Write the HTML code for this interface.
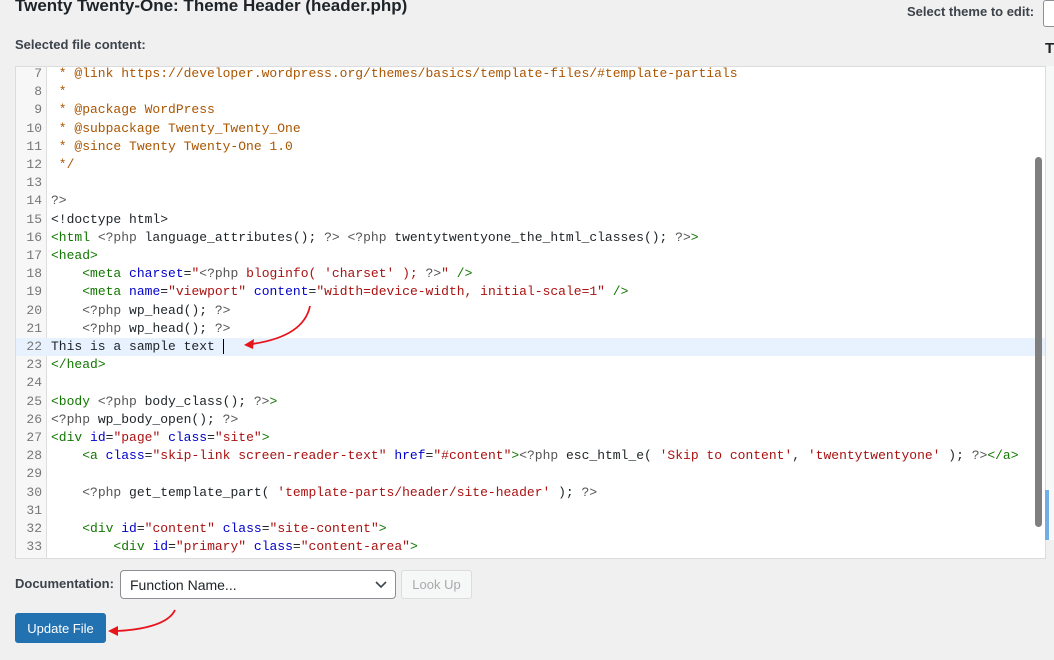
<!DOCTYPE html>
<html><head><meta charset="utf-8"><style>
body{margin:0;width:1054px;height:660px;background:#f0f0f1;font-family:"Liberation Sans",sans-serif;color:#1d2327;position:relative;overflow:hidden}
.a{position:absolute}
h1{position:absolute;left:15px;top:-6px;margin:0;font-size:17px;font-weight:600;line-height:24px}
.ed{left:15px;top:66px;width:1029px;height:491px;background:#fff;border:1px solid #dcdcde;overflow:hidden}
.gut{position:absolute;left:0;top:0;width:30px;height:100%;background:#f7f7f7;border-right:1px solid #ddd}
.ln{position:absolute;left:0;width:1029px;height:18.2px;font:13px/18.2px "Liberation Mono",monospace;white-space:pre}
.ln .n{display:inline-block;width:26px;text-align:right;color:#777;margin-right:9px}
.c{color:#aa5500}.t{color:#117700}.at{color:#0000cc}.s{color:#aa1111}.p{color:#555}
.hl{background:#e8f2ff}
.btn{border-radius:3px;font-size:13px;display:flex;align-items:center;justify-content:center}
</style></head><body>
<h1>Twenty Twenty-One: Theme Header (header.php)</h1>
<div class="a" style="left:907px;top:4px;font-size:13px;font-weight:600;color:#3c434a">Select theme to edit:</div>
<div class="a" style="left:1043px;top:0;width:20px;height:25px;background:#fff;border:1px solid #8c8f94;border-radius:3px"></div>
<div class="a" style="left:1045px;top:40px;font-size:15px;font-weight:600">T</div>
<div class="a" style="left:15px;top:37px;font-size:13px;font-weight:600;color:#3c434a">Selected file content:</div>
<div class="a ed">
<div class="gut"></div>
<div id="code"></div>
<div class="a" style="left:1019px;top:90px;width:7px;height:370px;background:#7f7f7f;border-radius:4px"></div>
</div>
<div class="a" style="left:1045px;top:66px;width:9px;height:474px;background:#f6f7f7;border-left:1px solid #dcdcde"></div>
<div class="a" style="left:1045px;top:490px;width:4px;height:50px;background:#72aee6"></div>
<div class="a" style="left:15px;top:576px;font-size:13px;font-weight:600;color:#3c434a">Documentation:</div>
<div class="a" style="left:120px;top:570px;width:274px;height:29px;background:#fff;border:1px solid #8c8f94;border-radius:4px;font-size:14px;line-height:29px;padding-left:9px;box-sizing:border-box;width:276px">Function Name...
<svg class="a" style="right:8px;top:9px" width="12" height="10"><path d="M1 2l5 5 5-5" fill="none" stroke="#3c434a" stroke-width="1.6"/></svg></div>
<div class="a btn" style="left:401px;top:570px;width:71px;height:29px;border:1px solid #dcdcde;background:#f6f7f7;color:#a7aaad;box-sizing:border-box;font-size:13px">Look Up</div>
<div class="a btn" style="left:15px;top:613px;width:91px;height:30px;background:#2271b1;color:#fff;border:1px solid #2271b1;box-sizing:border-box">Update File</div>
<svg class="a" style="left:0;top:0" width="1054" height="660">
<path d="M310 306 C305 330 280 340 252 344" fill="none" stroke="#e8141b" stroke-width="1.8"/>
<path d="M244 345 l10 -6 l-1 10z" fill="#e8141b"/>
<path d="M175 610 C168 625 140 630 116 631" fill="none" stroke="#e8141b" stroke-width="1.8"/>
<path d="M108 631 l10 -5 l0 10z" fill="#e8141b"/>
</svg>
<script>
var L=[
['7','<span class="c"> * @link https://developer.wordpress.org/themes/basics/template-files/#template-partials</span>'],
['8','<span class="c"> *</span>'],
['9','<span class="c"> * @package WordPress</span>'],
['10','<span class="c"> * @subpackage Twenty_Twenty_One</span>'],
['11','<span class="c"> * @since Twenty Twenty-One 1.0</span>'],
['12','<span class="c"> */</span>'],
['13',''],
['14','<span class="p">?&gt;</span>'],
['15','&lt;!doctype html&gt;'],
['16','<span class="t">&lt;html </span><span class="p">&lt;?php</span> language_attributes(); <span class="p">?&gt;</span> <span class="p">&lt;?php</span> twentytwentyone_the_html_classes(); <span class="p">?&gt;</span><span class="t">&gt;</span>'],
['17','<span class="t">&lt;head&gt;</span>'],
['18','    <span class="t">&lt;meta</span> <span class="at">charset</span>=<span class="s">"<span class="p">&lt;?php</span> bloginfo( \'charset\' ); <span class="p">?&gt;</span>"</span> <span class="t">/&gt;</span>'],
['19','    <span class="t">&lt;meta</span> <span class="at">name</span>=<span class="s">"viewport"</span> <span class="at">content</span>=<span class="s">"width=device-width, initial-scale=1"</span> <span class="t">/&gt;</span>'],
['20','    <span class="p">&lt;?php</span> wp_head(); <span class="p">?&gt;</span>'],
['21','    <span class="p">&lt;?php</span> wp_head(); <span class="p">?&gt;</span>'],
['22','This is a sample text <span style="border-left:1px solid #000"></span>'],
['23','<span class="t">&lt;/head&gt;</span>'],
['24',''],
['25','<span class="t">&lt;body </span><span class="p">&lt;?php</span> body_class(); <span class="p">?&gt;</span><span class="t">&gt;</span>'],
['26','<span class="p">&lt;?php</span> wp_body_open(); <span class="p">?&gt;</span>'],
['27','<span class="t">&lt;div</span> <span class="at">id</span>=<span class="s">"page"</span> <span class="at">class</span>=<span class="s">"site"</span><span class="t">&gt;</span>'],
['28','    <span class="t">&lt;a</span> <span class="at">class</span>=<span class="s">"skip-link screen-reader-text"</span> <span class="at">href</span>=<span class="s">"#content"</span><span class="t">&gt;</span><span class="p">&lt;?php</span> esc_html_e( <span class="s">\'Skip to content\'</span>, <span class="s">\'twentytwentyone\'</span> ); <span class="p">?&gt;</span><span class="t">&lt;/a&gt;</span>'],
['29',''],
['30','    <span class="p">&lt;?php</span> get_template_part( <span class="s">\'template-parts/header/site-header\'</span> ); <span class="p">?&gt;</span>'],
['31',''],
['32','    <span class="t">&lt;div</span> <span class="at">id</span>=<span class="s">"content"</span> <span class="at">class</span>=<span class="s">"site-content"</span><span class="t">&gt;</span>'],
['33','        <span class="t">&lt;div</span> <span class="at">id</span>=<span class="s">"primary"</span> <span class="at">class</span>=<span class="s">"content-area"</span><span class="t">&gt;</span>']
];
var h='';L.forEach(function(l,i){h+='<div class="ln'+(l[0]=='22'?' hl':'')+'" style="top:'+(i*18.2-2)+'px"><span class="n">'+l[0]+'</span>'+l[1]+'</div>';});
document.getElementById('code').innerHTML=h;
</script>
</body></html>
